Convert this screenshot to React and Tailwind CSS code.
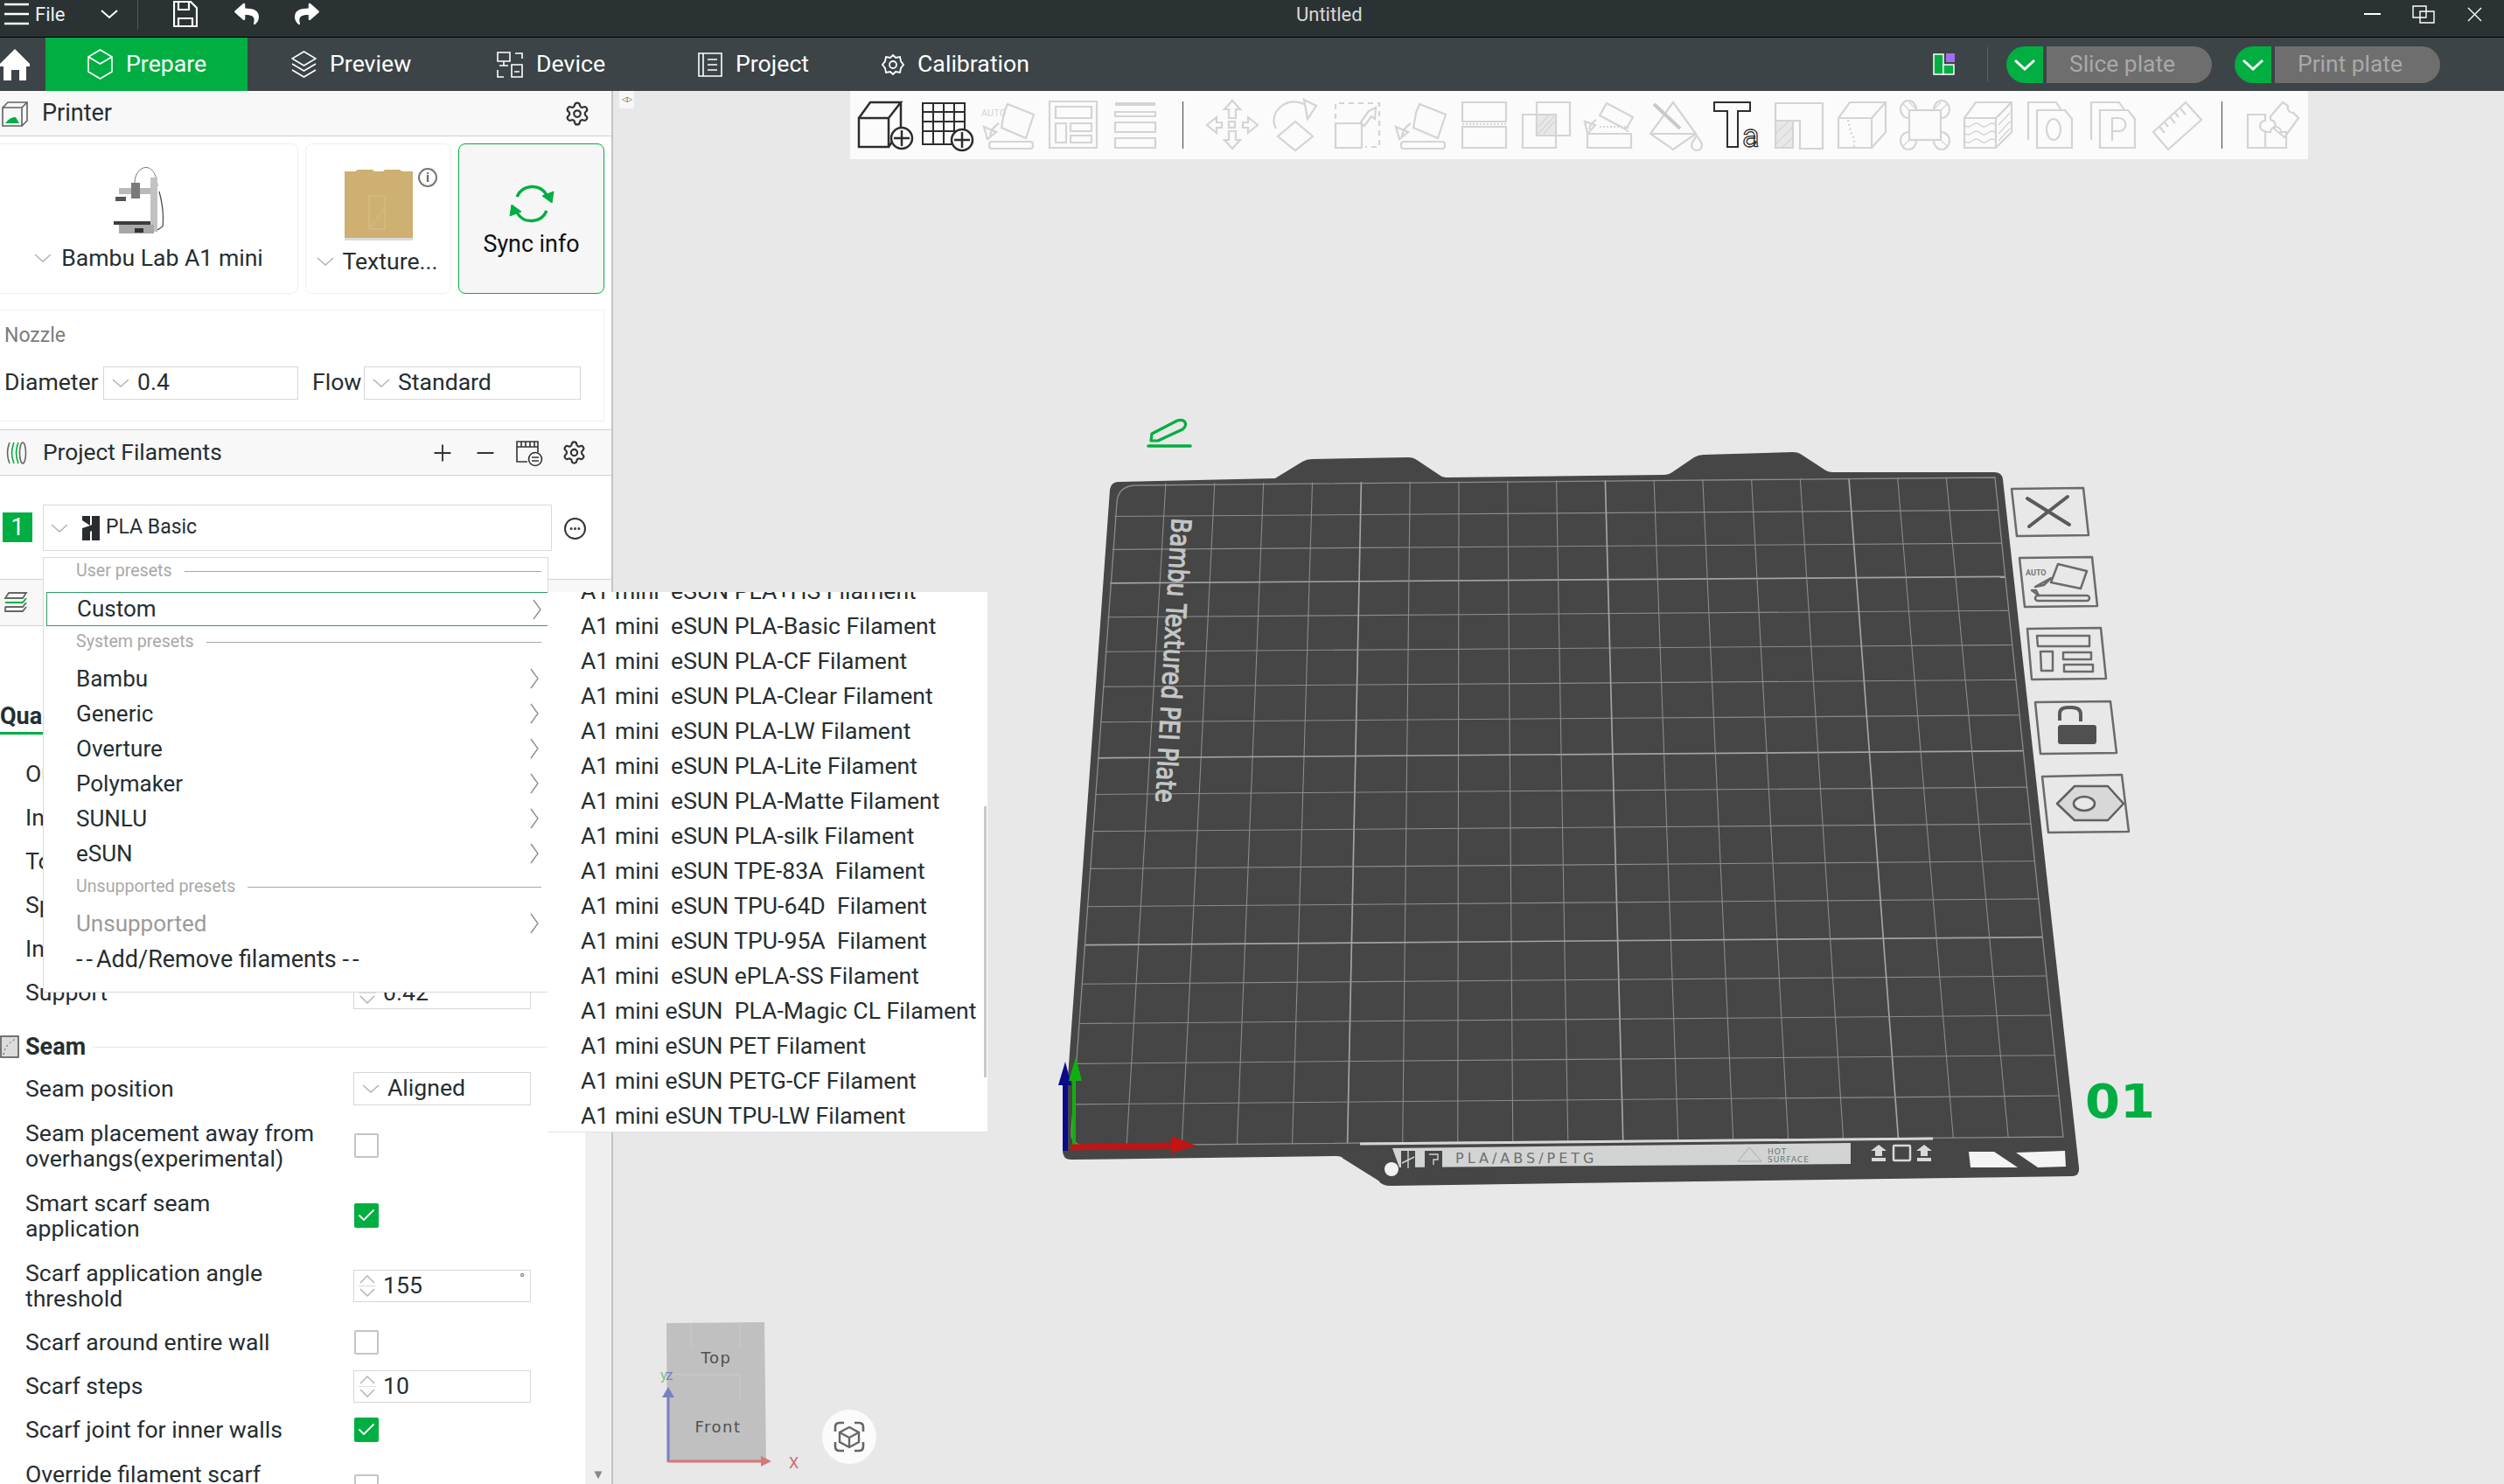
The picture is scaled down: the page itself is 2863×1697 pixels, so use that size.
import React from 'react';
import { Settings, Plus, Minus, Check, Ellipsis } from 'lucide-react';
import { FaReply, FaShare } from 'react-icons/fa';

const FONT = 'font-[Roboto,"Noto_Sans",sans-serif]';
const GREEN = '#00ae42';

// plate corners, used to project the grid
const TL = [1277, 553], TR = [2281, 546], BR = [2359, 1300], BL = [1225, 1310];
function makeProject() {
  const dx1 = TR[0] - BR[0], dx2 = BL[0] - BR[0], sx = TL[0] - TR[0] + BR[0] - BL[0];
  const dy1 = TR[1] - BR[1], dy2 = BL[1] - BR[1], sy = TL[1] - TR[1] + BR[1] - BL[1];
  const den = dx1 * dy2 - dx2 * dy1;
  const g = (sx * dy2 - dx2 * sy) / den, h = (dx1 * sy - sx * dy1) / den;
  const a = TR[0] - TL[0] + g * TR[0], b = BL[0] - TL[0] + h * BL[0];
  const d = TR[1] - TL[1] + g * TR[1], e = BL[1] - TL[1] + h * BL[1];
  return (u, v) => {
    const w = g * u + h * v + 1;
    return [(a * u + b * v + TL[0]) / w, (d * u + e * v + TL[1]) / w];
  };
}
const project = makeProject();
const gridLines = [];
for (let i = 1; i < 18; i++) {
  const [x1, y1] = project(i / 18, 0), [x2, y2] = project(i / 18, 1);
  gridLines.push({ x1, y1, x2, y2, bold: i % 5 === 0 });
  const [x3, y3] = project(0, i / 18), [x4, y4] = project(1, i / 18);
  gridLines.push({ x1: x3, y1: y3, x2: x4, y2: y4, bold: (18 - i) % 5 === 0 });
}

const submenu = [
  'A1 mini  eSUN PLA+HS Filament', 'A1 mini  eSUN PLA-Basic Filament', 'A1 mini  eSUN PLA-CF Filament',
  'A1 mini  eSUN PLA-Clear Filament', 'A1 mini  eSUN PLA-LW Filament', 'A1 mini  eSUN PLA-Lite Filament',
  'A1 mini  eSUN PLA-Matte Filament', 'A1 mini  eSUN PLA-silk Filament', 'A1 mini  eSUN TPE-83A  Filament',
  'A1 mini  eSUN TPU-64D  Filament', 'A1 mini  eSUN TPU-95A  Filament', 'A1 mini  eSUN ePLA-SS Filament',
  'A1 mini eSUN  PLA-Magic CL Filament', 'A1 mini eSUN PET Filament', 'A1 mini eSUN PETG-CF Filament', 'A1 mini eSUN TPU-LW Filament',
];

// the app's chevrons are flat and wide, lucide's are too narrow
const Chev = ({ className = '' }) => (
  <svg width="20" height="10" viewBox="0 0 20 10" fill="none" stroke="#b0b0b0" strokeWidth="1.4" className={`shrink-0 ${className}`}><path d="M1 1l9 8 9-8" /></svg>
);
const ChevUp = () => <svg width="18" height="10" viewBox="0 0 18 10" fill="none" stroke="#b0b0b0" strokeWidth="1.4"><path d="M1 9l8-8 8 8" /></svg>;
const ChevDown = () => <svg width="18" height="10" viewBox="0 0 18 10" fill="none" stroke="#b0b0b0" strokeWidth="1.4"><path d="M1 1l8 8 8-8" /></svg>;
const ChevRight = () => <svg width="10" height="24" viewBox="0 0 10 24" fill="none" stroke="#8a8a8a" strokeWidth="1.3" className="ml-auto shrink-0"><path d="M1 1l8 11-8 11" /></svg>;

function Checkbox({ on }) {
  if (on) return <div className="w-[28px] h-[28px] rounded-[2px] bg-[#00ae42] flex items-center justify-center"><Check size={24} strokeWidth={1.8} className="text-white" /></div>;
  return <div className="w-[28px] h-[28px] rounded-[2px] border-2 border-[#c4c4c4] bg-white" />;
}

function Combo({ value, className = '' }) {
  return (
    <div className={`h-[38px] border border-[#d6d6d6] bg-white flex items-center pl-[9px] ${className}`}>
      <Chev />
      <span className="ml-[9px] -mt-[2px] text-[26.6px] text-[#262e30]">{value}</span>
    </div>
  );
}

function Spin({ value, unit }) {
  return (
    <div className="w-[203px] h-[37px] border border-[#d6d6d6] bg-white flex items-center relative">
      <div className="w-[24px] ml-[3px] flex flex-col items-center gap-[2px]">
        <ChevUp />
        <div className="w-[20px] h-px bg-[#dddddd]" />
        <ChevDown />
      </div>
      <span className="ml-[6px] text-[26.6px] text-[#262e30]">{value}</span>
      {unit && <span className="ml-auto mr-[6px] -mt-[14px] text-[16px] text-[#777777]">{unit}</span>}
    </div>
  );
}

function Row({ label, h = 'h-[50px]', children }) {
  return (
    <div className={`flex items-center pl-[29px] ${h}`}>
      <div className="w-[375px] text-[26.6px] leading-[29.5px] text-[#262e30]">{label}</div>
      {children}
    </div>
  );
}

function NavTab({ label, active, className, children }) {
  return (
    <div className={`h-full flex items-center gap-[15px] text-white shrink-0 ${active ? 'bg-[#00ae42]' : ''} ${className}`}>
      {children}
      <span className="text-[26.7px]">{label}</span>
    </div>
  );
}

function ActionBtn({ label, className = '' }) {
  return (
    <div className={`flex h-[42px] ${className}`}>
      <div className="w-[42px] bg-[#00ae42] rounded-l-full flex items-center justify-center">
        <svg width="26" height="14" viewBox="0 0 26 14" fill="none" stroke="#ffffff" strokeWidth="3"><path d="M2 2l11 10L24 2" /></svg>
      </div>
      <div className="w-[189px] ml-[4px] bg-[#6e6e6e] rounded-r-full text-[26.4px] text-[#a9a9a9] flex items-center pl-[26px]">{label}</div>
    </div>
  );
}

// toolbar icons are all on a 64x56 box
const Tool = ({ dark, children }) => (
  <div className="w-[72px] h-[78px] flex items-center justify-center shrink-0">
    <svg width="64" height="56" viewBox="0 0 64 56" fill="none" stroke={dark ? '#2d2d2d' : '#d4d4d4'} strokeWidth={dark ? 2.5 : 2.2} className="overflow-visible">{children}</svg>
  </div>
);
const Sep = () => <div className="w-px h-[54px] bg-[#444444] shrink-0" />;

function Toolbar() {
  return (
    <div className="absolute left-[271px] top-0 w-[1667px] h-[78px] bg-[#fbfbfb] flex items-center pl-[2px]">
      <Tool dark><path d="M4 20h34v33H4zM4 20L17 2h35l-14 18M38 53l14-20V2" /><circle cx="53" cy="43" r="12" fill="#fbfbfb" /><path d="M53 34v18M44 43h18" /></Tool>
      <Tool dark><path d="M5 3h48v47H5zM5 13h48M5 24h48M5 35h48M17 3v47M29 3v47M41 3v47" strokeWidth="2" /><circle cx="50" cy="45" r="12" fill="#fbfbfb" /><path d="M50 36v18M41 45h18" /></Tool>
      <Tool><path d="M26 14l4-10 30 12-9 27-28-12zM20 26c-6 4-10 10-10 16M3 30l4 14 10-8z" /><rect x="9" y="47" width="50" height="8" rx="3" /><text x="0" y="18" fontSize="11" fill="#d4d4d4" stroke="none">AUTO</text></Tool>
      <Tool><path d="M6 1h54v53H6zM13 7h41v13H13zM13 26h12v22H13zM30 26h24v9H30zM30 40h24v8H30z" /></Tool>
      <Tool><path d="M9 4h46" strokeWidth="4" /><path d="M9 13h46v5H9zM9 25h46v11H9zM9 43h46v11H9z" /></Tool>
      <div className="w-[18px]" /><Sep /><div className="w-[20px]" />
      <Tool><path d="M32 0l9 10h-5v10h-8V10h-5zM32 55l9-10h-5V35h-8v10h-5zM3 28l11-9v6h6v6h-6v6zM61 28l-11-9v6h-6v6h6v6z" /><rect x="28" y="24" width="7" height="7" /></Tool>
      <Tool><path d="M32 24l20 17-20 16-20-16zM10 32C0 14 22-6 42 4M42-1l14 7-10 15z" /></Tool>
      <Tool><path d="M6 54V3h50v50H40" strokeDasharray="6 5" /><path d="M6 26h30v28H6zM44 12L34 26l5 3 8-11 4 3 1-13z" /></Tool>
      <Tool><path d="M26 14l4-10 30 12-9 27-28-12zM20 26c-6 4-10 10-10 16M3 30l4 14 10-8z" /><rect x="9" y="47" width="50" height="8" rx="3" /></Tool>
      <Tool><path d="M7 2h50v22H7zM7 30h50v24H7z" /><path d="M7 27h50" strokeDasharray="2 2" /></Tool>
      <Tool><path d="M20 2h38v38H20zM4 16h38v38H4z" /><path d="M20 16h22v24H20z" fill="#e8e8e8" /><path d="M22 38l18-20M28 38l12-14M22 30l12-13" strokeWidth="1.2" /></Tool>
      <Tool><path d="M28 3l30 16-8 14-30-16zM16 22c-5 4-8 7-8 11M3 24l3 14 9-10zM6 38h50v16H6z" /><path d="M20 30h32v8" strokeDasharray="2 2" /></Tool>
      <Tool><path d="M32 2l26 36-26 18L6 38z" /><path d="M6 38h52" /><path d="M10 4l30 28" strokeWidth="4" stroke="#c9c9c9" /><path d="M59 40c4 6 6 8 6 11a6 6 0 0 1-12 0c0-3 3-6 6-11z" /></Tool>
      <Tool dark><path d="M7 2h41v10H34v41H22V12H7z" fill="#fbfbfb" strokeWidth="2" /><text x="39" y="53" fontSize="36" fill="#fbfbfb" stroke="#2d2d2d" strokeWidth="1.3" fontFamily="Roboto">a</text></Tool>
      <Tool><path d="M5 3h54v52H33V23H5z" /><path d="M5 23h20v31H5z" fill="#e8e8e8" /><path d="M5 38l16-15M5 50l20-20M12 54l13-12" strokeWidth="1.2" /></Tool>
      <Tool><path d="M5 20h38v34H5zM5 20L18 2h41v34L43 54M43 20L59 2" /><path d="M16 22l3 14 4 8v10" strokeDasharray="2 3" /></Tool>
      <Tool><ellipse cx="13" cy="10" rx="9" ry="10" /><ellipse cx="51" cy="10" rx="9" ry="10" /><ellipse cx="13" cy="46" rx="9" ry="10" /><ellipse cx="51" cy="46" rx="9" ry="10" /><path d="M7 4l12 12M14 2l7 7M45 16l12-12M43 9l7-7M7 52l12-12M45 40l12 12" strokeWidth="1.2" /><rect x="14" y="11" width="36" height="34" fill="#fbfbfb" /></Tool>
      <Tool><path d="M5 20h36v34H5zM5 20L18 2h41v34L41 54M41 20L59 2" /><path d="M5 28q4 4 9 0t9 0 9 0 9 0M5 37q4 4 9 0t9 0 9 0 9 0M5 46q4 4 9 0t9 0 9 0 9 0M44 18l13-14M44 28l13-14M44 38l13-14M44 46l13-14" strokeWidth="1.4" /></Tool>
      <Tool><path d="M6 45V2h32l6 9" /><path d="M16 11h32l8 10v33H16z" fill="#fbfbfb" /><ellipse cx="35" cy="33" rx="8" ry="12" /></Tool>
      <Tool><path d="M6 45V2h32l6 9" /><path d="M16 11h32l8 10v33H16z" fill="#fbfbfb" /><path d="M30 46V20h8a7 7 0 0 1 0 15h-8" /></Tool>
      <Tool><path d="M42 2l18 20-38 34L5 36zM12 30l6 7M18 25l4 5M24 19l6 7M30 14l4 5M36 9l6 7" /></Tool>
      <div className="w-[15px]" /><Sep /><div className="w-[21px]" />
      <Tool><path d="M4 16h20v7a6 6 0 0 0 0 12v1h6a6 6 0 0 1 12 0h6v18H4zM24 36v18" /><path d="M30 18l14-16 6 4a6 6 0 0 0 6 8l6 6-16 22-12-10a6 6 0 0 0-4-10z" /></Tool>
    </div>
  );
}

function PlateButtons() {
  const box = 'fill-none stroke-[#6b6b6b]';
  return (
    <g strokeWidth="2.5" strokeLinejoin="round">
      <path d="M2300 559L2382 558 2388 612 2306 613Z" className={box} />
      <path d="M2318 570L2366 600M2364 568L2320 602" stroke="#5a5a5a" strokeWidth="4" strokeLinecap="round" />
      <path d="M2309 638L2392 637 2398 693 2315 694Z" className={box} />
      <path d="M2353 645L2386 653 2379 673 2345 666ZM2327 671l18-10-8 8zM2328 675h-5l8 6z" className={box} />
      <rect x="2327" y="681" width="62" height="6" rx="3" className={box} />
      <text x="2316" y="658" fontSize="9" fontWeight="700" fill="#777777" fontFamily="Roboto">AUTO</text>
      <path d="M2318 719L2402 718 2408 776 2323 777Z" className={box} />
      <path d="M2329 727h60v12h-59zM2333 745h14v22h-13zM2359 746h32v8h-32zM2360 760h33v8h-33z" className={box} />
      <path d="M2327 803L2413 802 2420 861 2333 862Z" className={box} />
      <path d="M2355 824v-8q0-7 10-7h4q10 0 10 8v8" fill="none" stroke="#5a5a5a" strokeWidth="4" />
      <rect x="2353" y="829" width="44" height="22" rx="3" fill="#505050" />
      <path d="M2335 888L2426 886 2434 951 2342 952Z" className={box} />
      <path d="M2352 919l20-20h38l18 20-18 19h-38z" fill="#d8d8d8" stroke="#5f5f5f" />
      <ellipse cx="2383" cy="919" rx="12" ry="8" fill="#e8e8e8" stroke="#5f5f5f" />
    </g>
  );
}

function Canvas() {
  return (
    <div className="flex-1 relative bg-[#e8e8e8] overflow-hidden">
      <div className="absolute left-[7px] top-0 w-[17px] h-[20px] bg-[#f7f7f7] text-[#555555] text-[8px] leading-[20px] text-center">◁▷</div>
      <Toolbar />
      <svg className="absolute left-0 top-0" width="2162" height="1593" viewBox="701 104 2162 1593">
        {/* edit pencil */}
        <path d="M1316 504l1-8 29-15q7-2 9 2t-3 8l-28 13z" fill="none" stroke={GREEN} strokeWidth="3.2" strokeLinejoin="round" />
        <path d="M1313 510h48" stroke={GREEN} strokeWidth="3.6" strokeLinecap="round" />
        {/* build plate */}
        <path fill="#454645" d="M1269 560Q1270 551 1280 551L1458 547 1489 528Q1494 525 1500 525L1610 523Q1616 523 1620 526L1647 544Q1650 546 1656 546L1902 543Q1908 543 1912 540L1937 523Q1942 520 1948 520L2050 517Q2056 517 2060 520L2086 537Q2090 540 2096 540L2280 540Q2289 540 2290 548L2377 1335Q2378 1344 2370 1345L1590 1356Q1580 1356 1576 1350L1536 1325Q1534 1322 1528 1322L1225 1326Q1215 1326 1215 1316Z" />
        {gridLines.map((l, i) => (
          <line key={i} x1={l.x1} y1={l.y1} x2={l.x2} y2={l.y2} stroke={l.bold ? '#a2a3a2' : '#8a8b8a'} strokeWidth={l.bold ? 1.7 : 1.1} />
        ))}
        <path d="M1277 575Q1278 555 1300 555L2281 546 2359 1300 1240 1310Q1225 1310 1225 1295Z" fill="none" stroke="#8b8c8b" strokeWidth="1.3" />
        <text transform="translate(1340 592) rotate(93.3)" fontSize="31" fill="#c3c5c5" stroke="#c3c5c5" strokeWidth="1.2" fontFamily="DejaVu Sans" textLength="326" lengthAdjust="spacingAndGlyphs">Bambu Textured PEI Plate</text>
        <path d="M1555 1308L2210 1302" stroke="#d5d6d6" strokeWidth="3" />
        <path d="M1592 1313L2116 1307V1331L1600 1335Z" fill="#d2d4d4" />
        <circle cx="1591" cy="1337" r="8" fill="#f1f1f1" />
        <path d="M1602 1316h16v20h-16zM1629 1316h20v19h-20z" fill="#454645" />
        <path d="M1610 1316v20M1603 1330l14-7M1634 1320h10v6h-5v6" fill="none" stroke="#d2d4d4" strokeWidth="1.4" />
        <text x="1664" y="1330" fontSize="16" fill="#6d6f6f" letterSpacing="1.5" fontFamily="DejaVu Sans" textLength="160">PLA/ABS/PETG</text>
        <path d="M2000 1312l14 16h-27z" fill="none" stroke="#a9abab" />
        <text x="2021" y="1320" fontSize="9" fill="#707272" letterSpacing="1" fontFamily="DejaVu Sans">HOT</text>
        <text x="2021" y="1329" fontSize="9" fill="#707272" letterSpacing="1" fontFamily="DejaVu Sans">SURFACE</text>
        <path d="M2139 1316l9-7 9 7h-5v6h-8v-6zM2140 1324h16v4h-16zM2191 1316l9-7 9 7h-5v6h-8v-6zM2192 1324h16v4h-16z" fill="#d8d9d9" />
        <rect x="2165" y="1310" width="19" height="17" rx="1" fill="none" stroke="#d8d9d9" strokeWidth="2.5" />
        <path d="M2251 1317L2280 1317 2307 1335 2253 1335Z" fill="#f4f4f4" />
        <path d="M2305 1318L2361 1316 2362 1334 2330 1335Z" fill="#f4f4f4" />
        <text x="2384" y="1278" fontSize="54" fontWeight="700" fill={GREEN} fontFamily="DejaVu Sans" textLength="80" lengthAdjust="spacingAndGlyphs">01</text>
        <PlateButtons />
        {/* origin axes */}
        <path d="M1218 1316V1240" stroke="#0b0b8a" strokeWidth="6" />
        <path d="M1210 1241L1218 1214 1225 1241Z" fill="#0b0b8a" />
        <path d="M1228 1310V1235" stroke="#10b010" strokeWidth="4" />
        <path d="M1222 1236L1230 1209 1237 1236Z" fill="#10b010" />
        <path d="M1224 1312L1342 1310" stroke="#c21414" strokeWidth="7" />
        <path d="M1339 1299L1368 1310 1339 1319Z" fill="#c21414" />
        {/* view cube */}
        <path d="M762 1513L874 1512 876 1672 763 1672Z" fill="#c0c0c0" />
        <path d="M790 1513V1540M846 1513V1540M762 1572H846M846 1572v27" stroke="#cccccc" strokeWidth="1" />
        <text x="819" y="1559" textAnchor="middle" fontSize="18" fill="#505050" fontFamily="DejaVu Sans" letterSpacing="1.5">Top</text>
        <text x="821" y="1638" textAnchor="middle" fontSize="18" fill="#505050" fontFamily="DejaVu Sans" letterSpacing="1.5">Front</text>
        <path d="M764 1672V1596" stroke="#7a80c4" strokeWidth="3" />
        <path d="M757 1598L764 1586 771 1598Z" fill="#7a80c4" />
        <path d="M764 1671H872" stroke="#d47878" strokeWidth="3" />
        <path d="M870 1665L882 1671 870 1677Z" fill="#d47878" />
        <text x="902" y="1679" fontSize="18" fill="#cf6f6f" fontFamily="Roboto">X</text>
        <text x="755" y="1578" fontSize="17" fill="#7fc08f" fontFamily="Roboto">y</text>
        <text x="761" y="1578" fontSize="17" fill="#7a80c4" fontFamily="Roboto">z</text>
        {/* camera button */}
        <circle cx="971" cy="1643" r="31" fill="#fbfbfb" />
        <path d="M955 1637v-5q0-5 5-5h5M977 1627h5q5 0 5 5v5M987 1649v5q0 5-5 5h-5M965 1659h-5q-5 0-5-5v-5" fill="none" stroke="#666666" strokeWidth="2.6" />
        <path d="M971 1632l11 6v11l-11 6-11-6v-11zM960 1638l11 6 11-6M971 1644v11" fill="none" stroke="#666666" strokeWidth="2.4" />
      </svg>
    </div>
  );
}

function GroupLabel({ label, className }) {
  return (
    <div className={`flex items-center pl-[37px] pr-[7px] text-[19.6px] text-[#a8a8a8] ${className}`}>
      <span>{label}</span>
      <div className="flex-1 ml-[14px] h-px bg-[#a8a8a8]" />
    </div>
  );
}

function Sidebar() {
  return (
    <div className="w-[701px] shrink-0 bg-white border-r-2 border-[#c4c4c4] relative z-10 flex flex-col">
      {/* Printer */}
      <div className="h-[52px] shrink-0 bg-[#f8f8f8] border-b border-[#d2d2d2] flex items-center pl-[2px] pr-[24px]">
        <svg width="30" height="30" viewBox="0 0 30 30" fill="none" stroke="#606060" strokeWidth="1.6"><path d="M1 8h22v21H1zM1 8l6-6h22v21l-6 6M23 8l6-6" /><path d="M4 26q6-8 12-7l4 7z" fill={GREEN} stroke="none" /></svg>
        <span className="ml-[16px] text-[27px] text-[#262e30]">Printer</span>
        <Settings size={30} strokeWidth={1.8} className="ml-auto text-[#333333]" />
      </div>
      <div className="flex gap-[8px] mt-[8px] h-[172px] pr-[8px] shrink-0">
        <div className="w-[341px] rounded-r-[8px] border border-l-0 border-[#f0f0f0] flex flex-col items-center pt-[20px]">
          <svg width="62" height="84" viewBox="0 0 62 84" fill="none" className="-ml-[18px]">
            <path d="M24 24C24 4 48-4 50 28" stroke="#777777" strokeWidth="1" />
            <path d="M6 30h44v7H6z" fill="#b9b9b9" />
            <path d="M20 24h10v18H20z" fill="#7a7a7a" />
            <path d="M42 18h8v62h-8z" fill="#c2c2c2" />
            <path d="M2 40h12v5H2z" fill="#555555" />
            <path d="M0 68h42v4H0z" fill="#3c3c3c" />
            <path d="M6 72h40v10H6z" fill="#a8a8a8" />
            <path d="M24 76h10v5H24z" fill="#333333" />
            <path d="M52 34q6 22 4 40l-6 4" stroke="#444444" strokeWidth="1.2" />
          </svg>
          <div className="flex items-center gap-[11px] mt-[6px]"><Chev /><span className="text-[26.6px] text-[#262e30]">Bambu Lab A1 mini</span></div>
        </div>
        <div className="w-[167px] rounded-[8px] border border-[#f0f0f0] relative flex flex-col items-center pt-[29px]">
          <svg width="78" height="82" viewBox="0 0 78 82"><path d="M0 2h12l3-2h17l2 2h10l2-2h17l3 2h12v78H0z" fill="#ceb072" /><path d="M28 30h18v38H28zM28 68l18-24" fill="none" stroke="#d8bf8c" /><path d="M0 78h78v3H0z" fill="#d9d9d9" /></svg>
          <div className="absolute right-[15px] top-[27px] w-[22px] h-[22px] rounded-full border-2 border-[#777777] text-[#666666] text-[15px] leading-[18px] text-center font-bold bg-white">i</div>
          <div className="flex items-center gap-[9px] mt-[3px] -ml-[2px]"><Chev /><span className="text-[26.6px] text-[#262e30] whitespace-nowrap">Texture...</span></div>
        </div>
        <div className="w-[167px] rounded-[8px] border border-[#00ae42] bg-[#f6f6f6] flex flex-col items-center pt-[44px]">
          <svg width="54" height="48" viewBox="0 0 54 48" fill="none" stroke={GREEN} strokeWidth="3.4"><path d="M10 16C16 2 36 0 44 14M44 32C38 46 18 48 10 34" /><path d="M39 15l13-5-2 13zM15 33L2 38l2-13z" fill={GREEN} strokeWidth="1" /></svg>
          <span className="mt-[2px] text-[26.8px] text-[#111111]">Sync info</span>
        </div>
      </div>
      {/* Nozzle */}
      <div className="mt-[18px] mr-[8px] h-[128px] shrink-0 border border-l-0 border-[#f0f0f0] pl-[5px]">
        <div className="mt-[17px] text-[23px] leading-[24px] text-[#7c7c7c]">Nozzle</div>
        <div className="mt-[23px] flex items-center">
          <span className="text-[26.6px] text-[#262e30] w-[113px] -mt-[2px]">Diameter</span>
          <Combo value="0.4" className="w-[223px]" />
          <span className="ml-[16px] w-[59px] text-[26.6px] text-[#262e30] -mt-[2px]">Flow</span>
          <Combo value="Standard" className="w-[248px]" />
        </div>
      </div>
      {/* Project filaments */}
      <div className="mt-[9px] h-[53px] shrink-0 bg-[#f8f8f8] border-y border-[#d2d2d2] flex items-center pl-[5px]">
        <svg width="26" height="28" viewBox="0 0 26 28" fill="none" strokeWidth="1.6"><path d="M6 2Q1 14 6 26" stroke="#666666" /><path d="M11 2Q6 14 11 26M16 2Q11 14 16 26" stroke={GREEN} /><ellipse cx="21" cy="14" rx="3.500" ry="12" stroke="#666666" /></svg>
        <span className="ml-[18px] text-[26.3px] text-[#262e30] w-[216px]">Project Filaments</span>
        <Plus size={30} strokeWidth={1.5} className="ml-[226px] text-[#333333]" />
        <Minus size={30} strokeWidth={1.5} className="ml-[19px] text-[#333333]" />
        <svg width="32" height="32" viewBox="0 0 32 32" fill="none" stroke="#333333" strokeWidth="1.6" className="ml-[19px]"><path d="M2 3h24v6H2zM7 3v6M12 3v6M17 3v6M22 3v6M2 9v17h12M26 9v6" /><circle cx="23" cy="23" r="7.500" /><path d="M19 21h8M19 25h8" /></svg>
        <Settings size={29} strokeWidth={1.8} className="ml-[21px] text-[#333333]" />
      </div>
      {/* filament slot 1 */}
      <div className="h-[118px] shrink-0 flex items-start pt-[33px] pl-[3px]">
        <div className="w-[34px] h-[34px] mt-[9px] bg-[#00ae42] text-white text-[27px] leading-[34px] text-center">1</div>
        <div className="ml-[12px] w-[582px] h-[53px] border border-[#d9d9d9] flex items-center pl-[8px]">
          <Chev />
          <svg width="20" height="28" viewBox="0 0 20 28" className="ml-[16px]"><path d="M0 0h9v11L0 5zM11 0h9v28h-9V17l-2 1-9 5v-9l9-3 2-1zM0 17l9-3v14H0z" fill="#282e30" /></svg>
          <span className="ml-[7px] text-[23px] text-[#262e30]">PLA Basic</span>
        </div>
        <div className="ml-[14px] mt-[15px] w-[25px] h-[25px] rounded-full border-2 border-[#333333] flex items-center justify-center"><Ellipsis size={15} strokeWidth={3} className="text-[#333333]" /></div>
      </div>
      {/* process band */}
      <div className="h-[54px] shrink-0 bg-[#f8f8f8] border-y border-[#d2d2d2] flex items-center pl-[4px]">
        <svg width="28" height="28" viewBox="0 0 28 28" fill="none" stroke="#666666" strokeWidth="1.8"><path d="M6 3h20l-4 6H2z" /><path d="M2 14h20l4-5" stroke={GREEN} /><path d="M2 19h20l4-5M2 19v5h20l4-5" /></svg>
      </div>
      {/* settings */}
      <div className="flex flex-1 min-h-0">
        <div className="flex-1 min-w-0 overflow-hidden">
          <div className="h-[124px] flex items-end">
            <div className="h-[40px] pt-[4px] border-b-[3px] border-[#00ae42] text-[27px] leading-[30px] font-bold text-[#262e30] w-[120px]">Quality</div>
          </div>
          <div className="h-[20px]" />
          <Row label="Outer wall" /><Row label="Inner wall" /><Row label="Top surface" /><Row label="Sparse infill" /><Row label="Internal solid infill" />
          <Row label="Support"><Spin value="0.42" unit="mm" /></Row>
          <div className="h-[17px]" />
          <div className="h-[40px] flex items-center">
            <svg width="22" height="26" viewBox="0 0 22 26"><rect x="1" y="1" width="20" height="24" fill="#dcdcdc" stroke="#555555" strokeWidth="1.6" /><path d="M4 22q2-12 14-18" fill="none" stroke="#444444" strokeDasharray="2 3" /></svg>
            <span className="ml-[7px] text-[27px] font-bold text-[#262e30]">Seam</span>
            <div className="ml-[8px] flex-1 h-px bg-[#e6e6e6]" />
          </div>
          <div className="h-[3px]" />
          <Row label="Seam position"><Combo value="Aligned" className="w-[203px]" /></Row>
          <Row h="h-[80px]" label={<>Seam placement away from<br />overhangs(experimental)</>}><div className="ml-[1px]"><Checkbox /></div></Row>
          <Row h="h-[80px]" label={<>Smart scarf seam<br />application</>}><div className="ml-[1px]"><Checkbox on /></div></Row>
          <Row h="h-[80px]" label={<>Scarf application angle<br />threshold</>}><Spin value="155" unit="°" /></Row>
          <Row label="Scarf around entire wall"><div className="ml-[1px]"><Checkbox /></div></Row>
          <Row label="Scarf steps"><Spin value="10" /></Row>
          <Row label="Scarf joint for inner walls"><div className="ml-[1px]"><Checkbox on /></div></Row>
          <Row h="h-[80px]" label={<>Override filament scarf<br />seam setting</>}><div className="ml-[1px]"><Checkbox /></div></Row>
        </div>
        <div className="w-[30px] shrink-0 bg-[#efefef] flex flex-col justify-end items-center pb-[3px] text-[#888888] text-[15px] leading-[16px]">▼</div>
      </div>

      {/* open filament dropdown */}
      <div className="absolute left-[49px] top-[533px] w-[578px] h-[498px] bg-white border border-[#d9d9d9] text-[26px] text-[#262e30]">
        <GroupLabel label="User presets" className="h-[29px] pt-px" />
        <div className="h-[10px]" />
        <div className="h-[39px] ml-[3px] border border-r-0 border-[#2f9e68] flex items-center pl-[34px] pr-[7px]">Custom<ChevRight /></div>
        <GroupLabel label="System presets" className="h-[36px] mb-[4px]" />
        {['Bambu', 'Generic', 'Overture', 'Polymaker', 'SUNLU', 'eSUN'].map(name => (
          <div key={name} className="h-[40px] flex items-center pl-[37px] pr-[10px]">{name}<ChevRight /></div>
        ))}
        <GroupLabel label="Unsupported presets" className="h-[36px] mb-[4px]" />
        <div className="h-[40px] flex items-center pl-[37px] pr-[10px] text-[#9a9a9a]">Unsupported<ChevRight /></div>
        <div className="h-[40px] flex items-center pl-[37px] pt-[2px] text-[27px] whitespace-pre"><span className="tracking-[4px]">--</span>Add/Remove filaments <span className="tracking-[4px]">--</span></div>
      </div>
      {/* flyout */}
      <div className="absolute left-[626px] top-[573px] w-[503px] h-[618px] bg-white overflow-hidden border-b border-[#e2e2e2] text-[26.6px] text-[#262e30]">
        <div className="-mt-[21px] pl-[38px]">
          {submenu.map(s => <div key={s} className="h-[40px] leading-[40px] whitespace-pre">{s}</div>)}
        </div>
        <div className="absolute right-[1px] top-[245px] w-[3px] h-[310px] bg-[#c8c8c8]" />
      </div>
    </div>
  );
}

export default function App() {
  return (
    <div className={`w-[2863px] h-[1697px] flex flex-col overflow-hidden bg-[#e8e8e8] ${FONT}`}>
      {/* title bar */}
      <div className="h-[43px] shrink-0 bg-[#2b3234] border-b border-black flex items-center pb-[10px] text-white">
        <div className="w-[1482px] shrink-0 flex items-center pl-[5px]">
          <svg width="28" height="30" viewBox="0 0 28 30" stroke="#ffffff" strokeWidth="2.4"><path d="M0 4h28M0 15h28M0 26h28" /></svg>
          <span className="ml-[7px] text-[22px] text-[#eeeeee]">File</span>
          <svg width="20" height="11" viewBox="0 0 20 11" fill="none" stroke="#ffffff" strokeWidth="2" className="ml-[40px]"><path d="M1 1l9 8 9-8" /></svg>
          <div className="ml-[22px] w-px h-[36px] bg-[#555555]" />
          <svg width="28" height="30" viewBox="0 0 28 30" fill="none" stroke="#ffffff" strokeWidth="2.200" className="ml-[40px]"><path d="M1 1h19l7 7v21H1zM6 1v9h12V1M6 29v-9h16v9" /></svg>
          <FaReply size={28} className="ml-[42px]" />
          <FaShare size={28} className="ml-[41px]" />
        </div>
        <span className="text-[22px] text-[#d8d8d8]">Untitled</span>
        <div className="ml-auto mr-[25px] flex items-center">
          <div className="w-[19px] h-[2px] bg-white" />
          <svg width="26" height="21" viewBox="0 0 26 21" fill="none" stroke="#ffffff" strokeWidth="1.4" className="ml-[36px]"><path d="M1 1h15v13H1zM9 7h16v13H9z" /></svg>
          <svg width="17" height="17" viewBox="0 0 17 17" stroke="#ffffff" strokeWidth="1.4" className="ml-[37px]"><path d="M1 1l15 15M16 1L1 16" /></svg>
        </div>
      </div>
      {/* nav */}
      <div className="h-[61px] shrink-0 bg-[#3c4447] flex items-center">
        <svg width="34" height="36" viewBox="0 0 34 36" fill="#ffffff" className="shrink-0"><path d="M17 0L34 17v3h-4v16h-8V24h-9v12H4V20H0v-3z" /></svg>
        <div className="w-[18px] shrink-0" />
        <NavTab label="Prepare" active className="w-[231px] pl-[48px]">
          <svg width="29" height="35" viewBox="0 0 29 35" fill="none" stroke="#ffffff" strokeWidth="1.6"><path d="M14.500 1L28 9v17l-13.500 8L1 26V9zM1 9l13.500 8L28 9" /></svg>
        </NavTab>
        <NavTab label="Preview" className="w-[235px] pl-[50px]">
          <svg width="29" height="32" viewBox="0 0 29 32" fill="none" stroke="#ffffff" strokeWidth="1.6"><path d="M14.500 1L28 9 14.500 17 1 9zM1 15l13.500 8L28 15M1 22l13.500 8L28 22" /></svg>
        </NavTab>
        <NavTab label="Device" className="w-[230px] pl-[50px]">
          <svg width="30" height="30" viewBox="0 0 30 30" fill="none" stroke="#ffffff" strokeWidth="1.6"><path d="M1 1h14v10H1zM8 11v5M3 16h10M21 2h8v6M1 21v8h7M17 15h12v14H17zM20 23h6" /></svg>
        </NavTab>
        <NavTab label="Project" className="w-[210px] pl-[50px]">
          <svg width="28" height="28" viewBox="0 0 28 28" fill="none" stroke="#ffffff" strokeWidth="1.6"><path d="M1 1h26v26H1zM6 1v26M11 8h11M11 14h11M11 20h11" /></svg>
        </NavTab>
        <NavTab label="Calibration" className="pl-[50px]">
          <svg width="26" height="26" viewBox="0 0 26 26" fill="none" stroke="#ffffff" strokeWidth="1.8"><path d="M13 2l3 3 5-1 1 5 3 4-3 4-1 5-5-1-3 3-3-3-5 1-1-5-3-4 3-4 1-5 5 1z" /><circle cx="13" cy="13" r="4" /></svg>
        </NavTab>
        <div className="ml-auto mr-[73px] flex items-center">
          <svg width="25" height="25" viewBox="0 0 25 25" fill="none"><rect x="1" y="1" width="11" height="23" fill={GREEN} stroke="#ffffff" strokeWidth="1.5" /><rect x="12" y="13" width="12" height="11" fill={GREEN} stroke="#ffffff" strokeWidth="1.5" /><rect x="15" y="0" width="10" height="10" fill="#a070f0" /></svg>
          <div className="ml-[37px] mr-[21px] w-px h-[39px] bg-[#5c6466]" />
          <ActionBtn label="Slice plate" />
          <ActionBtn label="Print plate" className="ml-[26px]" />
        </div>
      </div>
      <div className="flex-1 flex min-h-0">
        <Sidebar />
        <Canvas />
      </div>
    </div>
  );
}
